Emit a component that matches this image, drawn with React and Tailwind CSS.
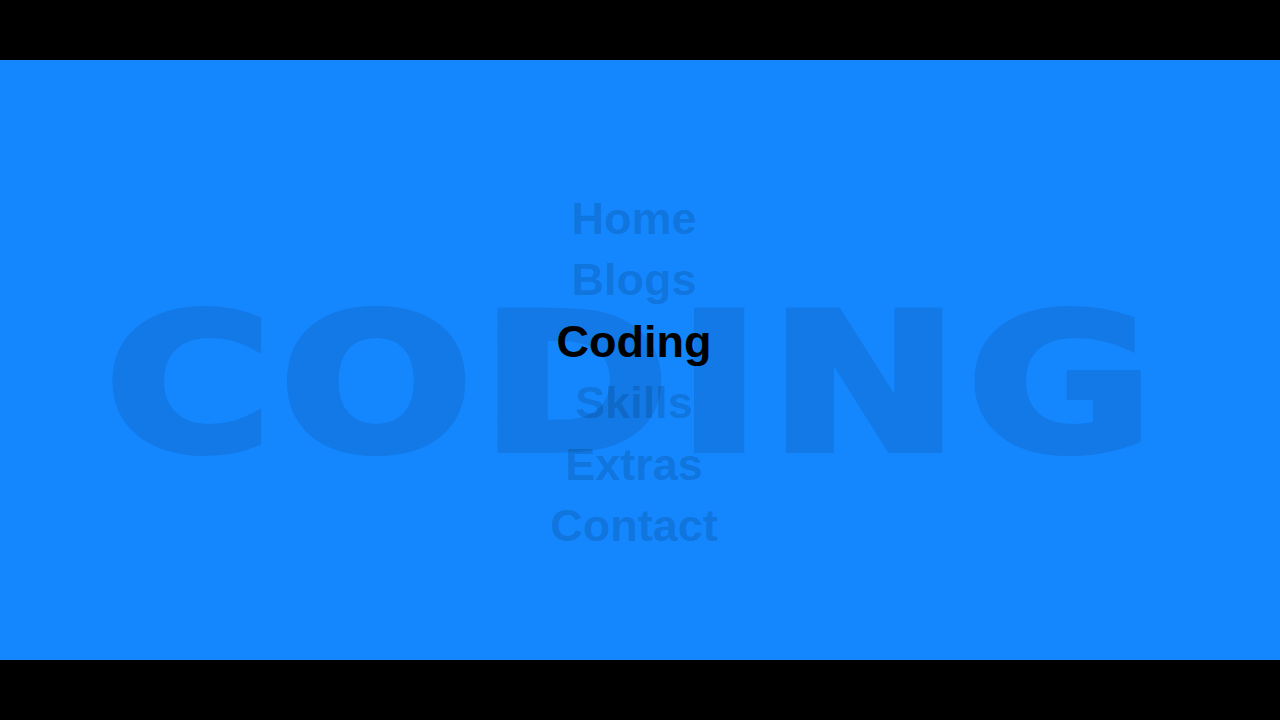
const ITEMS = ['Home', 'Blogs', 'Coding', 'Skills', 'Extras', 'Contact'];

export default function App() {
  return (
    <div className="flex h-screen w-full flex-col bg-black" style={{ fontFamily: '"Liberation Sans", Arial, sans-serif' }}>
      <div className="h-[60px] shrink-0" />
      <div className="grid flex-1 place-items-center overflow-hidden bg-[#1486fe]">
        <div className="col-start-1 row-start-1 mt-[50px] pr-[12px] select-none scale-x-[1.2] font-['DejaVu_Sans',sans-serif] text-[190px] font-bold leading-none tracking-[6px] text-[#1279e6] [-webkit-text-stroke:6px_#1279e6]">
          CODING
        </div>
        <ul className="relative z-10 col-start-1 row-start-1 mt-[24px] mr-[12px] flex flex-col items-center">
          {ITEMS.map((item) => (
            <li
              key={item}
              className={`text-[45px] font-bold leading-[61.5px] ${item === 'Coding' ? 'text-black' : 'text-black/15'}`}
            >
              {item}
            </li>
          ))}
        </ul>
      </div>
      <div className="h-[60px] shrink-0" />
    </div>
  );
}
